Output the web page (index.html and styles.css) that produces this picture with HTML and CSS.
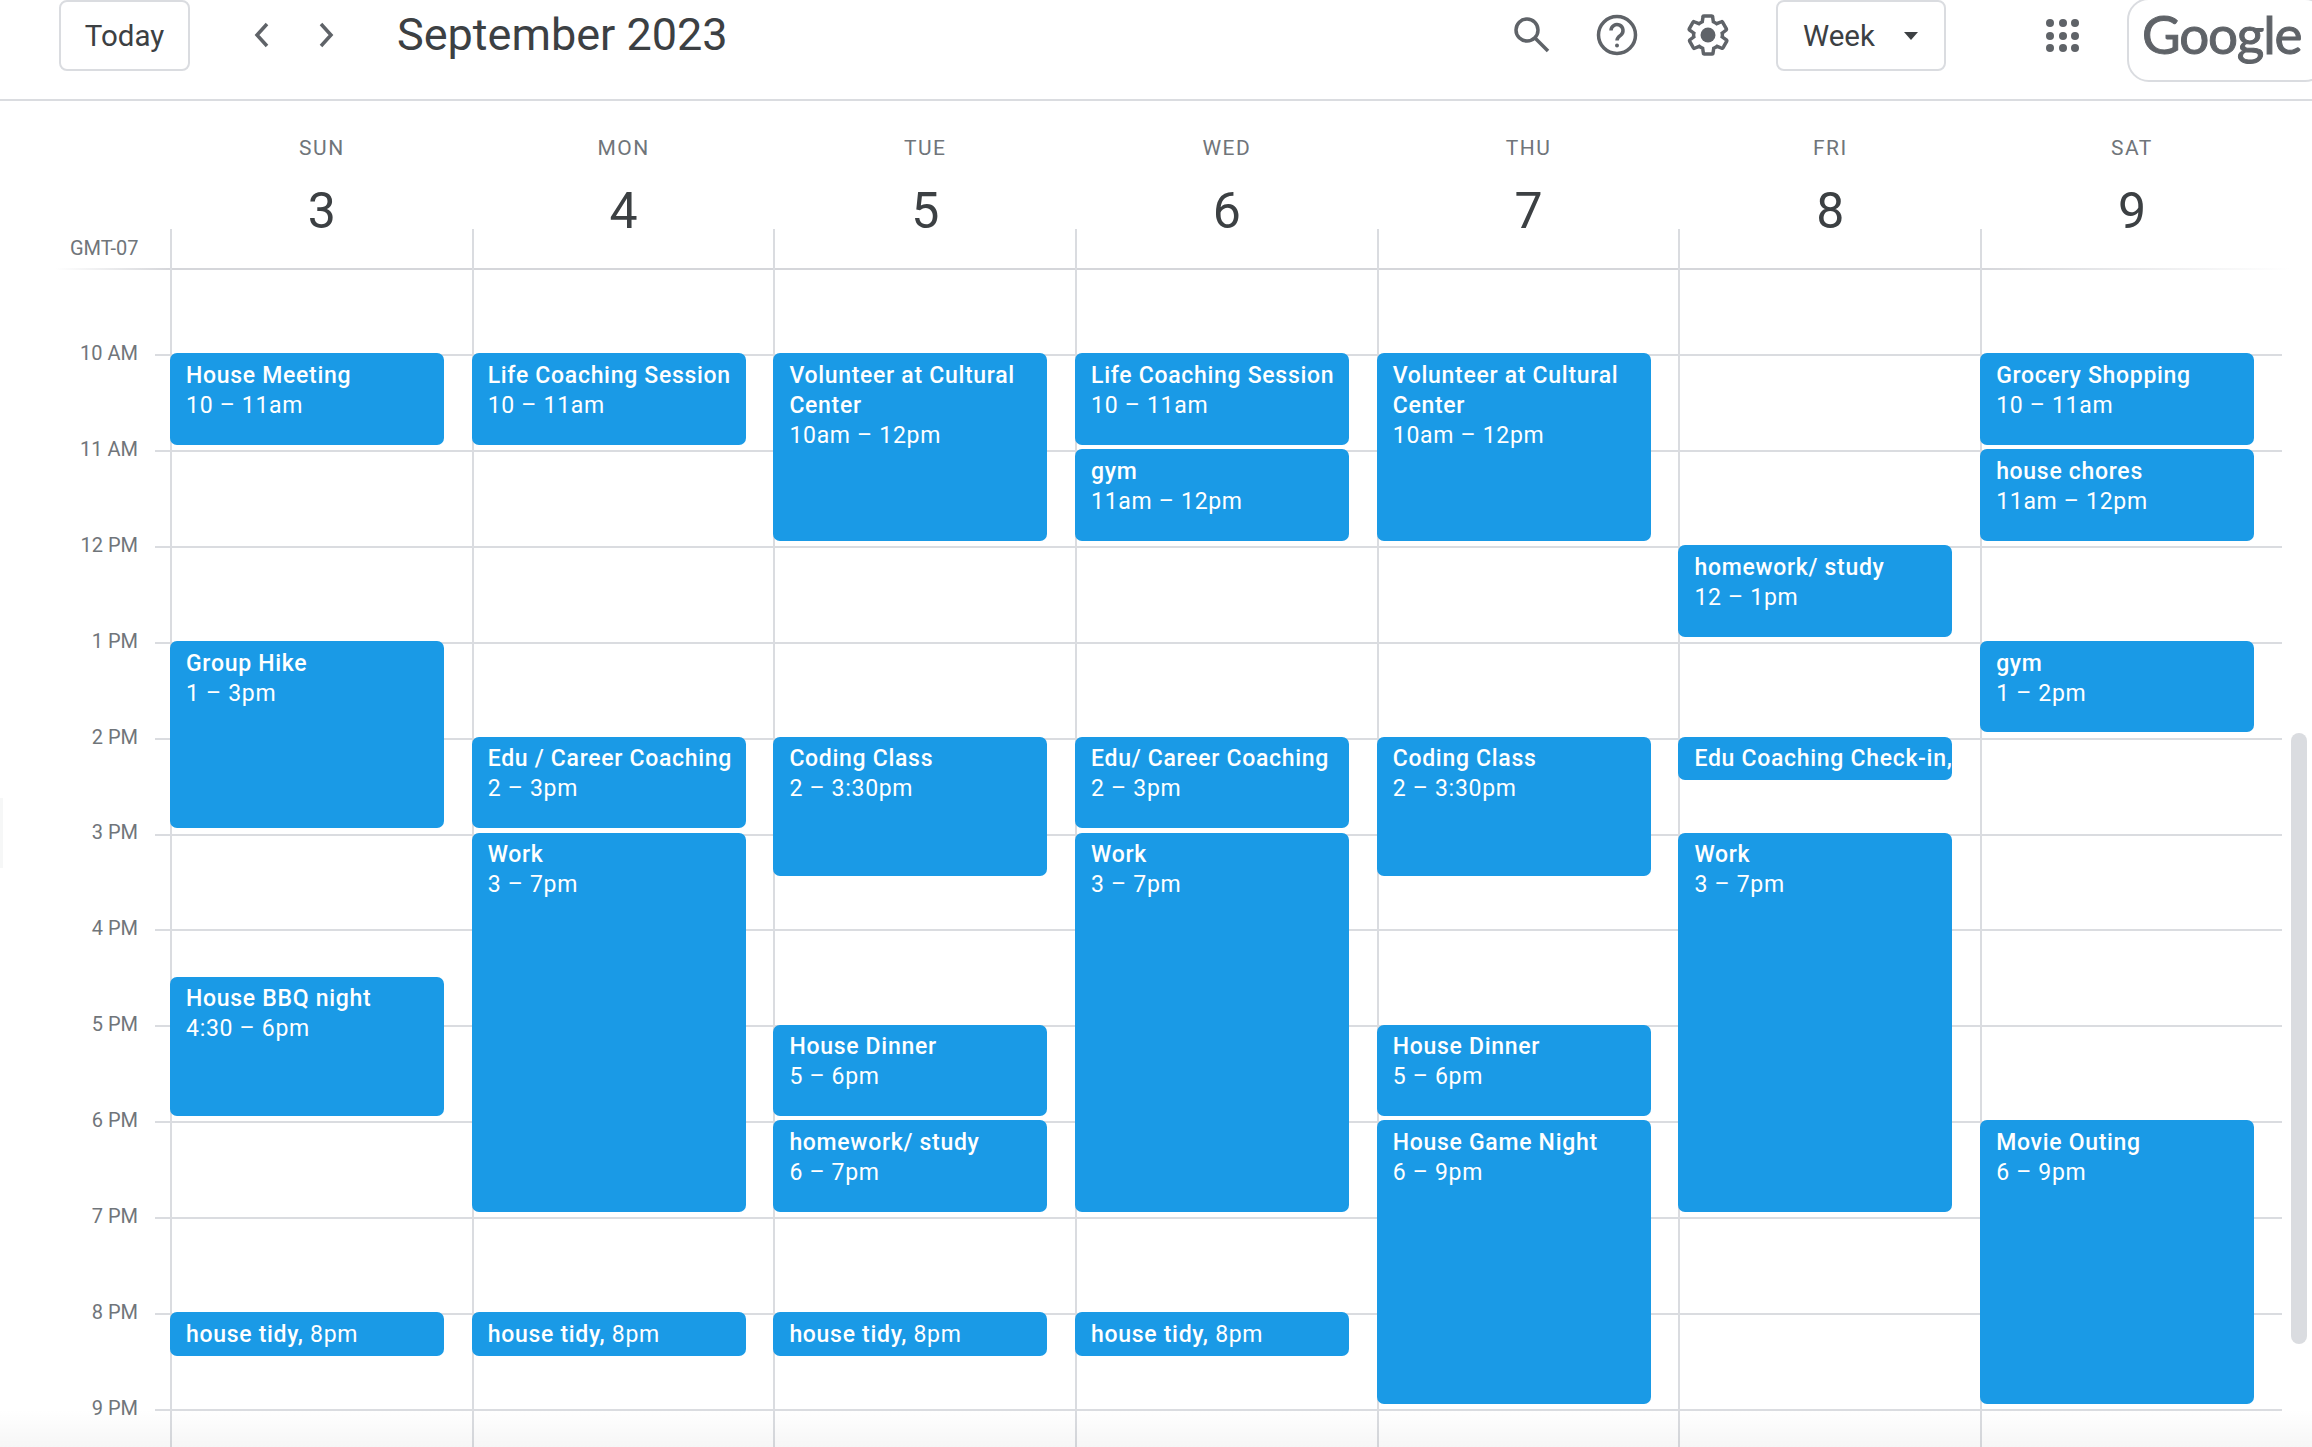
FILE: index.html
```html
<!DOCTYPE html>
<html lang="en">
<head>
  <meta charset="UTF-8" />
  <title>Calendar - September 2023</title>
  <link rel="stylesheet" href="styles.css">
</head>
<body>
<header class="topbar">
  <button class="btn today">Today</button>
  <div class="arrows">
    <svg width="16" height="26" viewBox="0 0 16 26"><path d="M13 2 3 13l10 11" /></svg>
    <svg width="16" height="26" viewBox="0 0 16 26"><path d="M3 2l10 11L3 24" /></svg>
  </div>
  <h1 class="month">September 2023</h1>
  <div class="tools">
    <svg class="search" width="36" height="36" viewBox="0 0 36 36"><circle cx="13" cy="13" r="11" /><path d="M21 21 34 34" /></svg>
    <svg class="help" width="42" height="42" viewBox="0 0 42 42"><circle cx="21" cy="21" r="18.5" /><path d="M15 16.5a6 6 0 1 1 9.600 4.800c-2.200 1.700-3.600 2.700-3.600 5.200" /><circle class="fill" cx="21" cy="31.500" r="2" /></svg>
    <svg class="gear" width="46" height="46" viewBox="0 0 24 24"><path d="M19.4 13c.1-.3.1-.6.1-1s0-.7-.1-1l2.100-1.600c.2-.2.2-.4.1-.6l-2-3.500c-.1-.2-.4-.3-.6-.2l-2.500 1c-.5-.4-1.100-.7-1.700-1l-.4-2.600c0-.3-.2-.4-.5-.4h-4c-.3 0-.5.100-.5.400l-.4 2.600c-.6.300-1.200.600-1.700 1l-2.500-1c-.2-.100-.5 0-.6.200l-2 3.500c-.1.200-.1.400.1.600L4.600 11c-.1.300-.1.600-.1 1s0 .7.100 1l-2.100 1.600c-.2.200-.2.400-.1.600l2 3.500c.1.200.4.300.6.200l2.500-1c.5.400 1.100.700 1.700 1l.4 2.600c0 .3.200.4.500.4h4c.3 0 .5-.100.500-.400l.4-2.600c.6-.300 1.200-.600 1.700-1l2.500 1c.2.100.5 0 .6-.200l2-3.500c.1-.2.1-.4-.1-.6z" /><circle class="fill" cx="12" cy="12" r="3.900" /></svg>
  </div>
  <button class="btn week">Week <span class="caret"></span></button>
  <div class="apps">
    <i></i><i></i><i></i><i></i><i></i><i></i><i></i><i></i><i></i>
  </div>
  <div class="logo">Google</div>
</header>

<div class="days">
  <div class="day"><span>SUN</span><b>3</b></div>
  <div class="day"><span>MON</span><b>4</b></div>
  <div class="day"><span>TUE</span><b>5</b></div>
  <div class="day"><span>WED</span><b>6</b></div>
  <div class="day"><span>THU</span><b>7</b></div>
  <div class="day"><span>FRI</span><b>8</b></div>
  <div class="day"><span>SAT</span><b>9</b></div>
</div>

<div class="allday">
  <div class="gmt">GMT-07</div>
  <div class="allday-cols">
    <div></div><div></div><div></div><div></div><div></div><div></div><div></div>
  </div>
</div>

<main class="schedule">
  <div class="hours">
    <span>10 AM</span><span>11 AM</span><span>12 PM</span><span>1 PM</span><span>2 PM</span><span>3 PM</span>
    <span>4 PM</span><span>5 PM</span><span>6 PM</span><span>7 PM</span><span>8 PM</span><span>9 PM</span>
  </div>
  <div class="grid" id="grid"></div>
</main>

<div class="scrollbar"></div>
<div class="edge"></div>
<div class="fade"></div>

<script src="app.js"></script>
</body>
</html>
```

FILE: styles.css
```css
* {
  box-sizing: border-box;
  margin: 0;
  padding: 0;
}

html, body {
  height: 100%;
  overflow: hidden;
}

body {
  background: #fff;
  color: #3c4043;
  font-family: Roboto, sans-serif;
}

svg {
  fill: none;
  stroke: #5f6368;
  stroke-width: 3.5;
  display: block;
}

svg .fill {
  fill: #5f6368;
  stroke: none;
}

svg.gear {
  stroke-width: 1.800;
}

/* top bar */
.topbar {
  height: 101px;
  border-bottom: 2px solid #dadce0;
  display: flex;
  align-items: flex-start;
  padding-left: 59px;
  overflow: hidden;
}

.btn {
  height: 71px;
  flex: none;
  background: #fff;
  border: 2px solid #dadce0;
  border-radius: 8px;
  color: #3c4043;
  font-family: Roboto, sans-serif;
  font-size: 29.500px;
}

.today {
  width: 131px;
}

.arrows {
  display: flex;
  gap: 48px;
  margin: 22px 0 0 64px;
}

.month {
  flex: none;
  font-size: 45px;
  font-weight: 400;
  line-height: 70px;
  margin-left: 63px;
  width: 1125px;
}

.tools {
  flex: none;
  display: flex;
  align-items: center;
  height: 70px;
  margin-left: -8px;
}

.help {
  margin-left: 46px;
}

.gear {
  margin-left: 47px;
}

.week {
  width: 170px;
  margin-left: 45px;
  display: flex;
  align-items: center;
  padding-left: 25px;
}

.caret {
  border-left: 7px solid transparent;
  border-right: 7px solid transparent;
  border-top: 8px solid #3c4043;
  margin-left: 29px;
}

.apps {
  flex: none;
  display: grid;
  grid-template-columns: repeat(3, 8px);
  gap: 4.500px;
  margin: 19px 0 0 100px;
}

.apps i {
  width: 8px;
  height: 8px;
  border-radius: 50%;
  background: #5f6368;
}

.logo {
  width: 200px;
  height: 84px;
  flex: none;
  margin: -2px 0 0 48px;
  border: 2px solid #dadce0;
  border-radius: 22px;
  padding-left: 13px;
  color: #5f6368;
  font-family: Lato, sans-serif;
  font-size: 53px;
  font-weight: 400;
  -webkit-text-stroke: 1px #5f6368;
  letter-spacing: -1.200px;
  line-height: 68px;
}

/* day heads */
.days {
  display: grid;
  grid-template-columns: repeat(7, 301.7px);
  padding-left: 171px;
  height: 128px;
  text-align: center;
}

.day span {
  display: block;
  margin-top: 33px;
  font-size: 21px;
  letter-spacing: 1.500px;
  line-height: 28px;
  color: #70757a;
}

.day b {
  display: block;
  font-size: 50px;
  font-weight: 400;
  line-height: 60px;
  margin-top: 19px;
}

.allday {
  display: flex;
  height: 41px;
  background: linear-gradient(90deg, transparent 55px, #d5d6da 170px, #d5d6da 1980px, transparent 2290px) 0 100% / 100% 2px no-repeat;
}

.gmt {
  width: 170px;
  padding: 5px 0 0 70px;
  font-size: 20px;
  line-height: 28px;
  color: #70757a;
}

.allday-cols {
  display: grid;
  grid-template-columns: repeat(7, 301.7px);
}

.allday-cols div {
  border-left: 2px solid #dadce0;
}

/* schedule */
.schedule {
  display: flex;
  height: 1177px;
}

.hours {
  width: 155px;
  padding: 69px 17px 0 0;
  display: grid;
  grid-auto-rows: 95.900px;
  text-align: right;
  font-size: 20px;
  line-height: 28px;
  color: #70757a;
}

.grid {
  width: 2127px;
  padding: 83.400px 0 0 15px;
  display: grid;
  grid-template-columns: repeat(7, 301.7px);
  background: repeating-linear-gradient(180deg, #dadce0 0, #dadce0 2px, transparent 2px, transparent 95.900px) 0 83.500px no-repeat;
}

.col {
  display: grid;
  grid-template-rows: repeat(48, 23.975px);
  margin-top: -83.400px;
  padding-top: 83.400px;
  border-left: 2px solid #dadce0;
}

.event {
  width: 274px;
  margin: 0 0 4.500px -2px;
  padding: 7.500px 8px 0 16px;
  background: #1a9ae6;
  border-radius: 7px;
  color: #fff;
  font-size: 23px;
  letter-spacing: 0.700px;
  line-height: 30px;
  overflow: hidden;
}

.event b {
  display: block;
  font-weight: 500;
}

.event.short {
  padding-right: 0;
  white-space: nowrap;
}

.event .when {
  font-weight: 400;
}

.scrollbar {
  position: absolute;
  left: 2291px;
  top: 733px;
  width: 16px;
  height: 611px;
  border-radius: 8px;
  background: #dadce0;
}

.edge {
  position: absolute;
  left: 0;
  top: 798px;
  width: 3px;
  height: 70px;
  background: #f6f7f7;
}

.fade {
  position: absolute;
  left: 0;
  right: 0;
  bottom: 0;
  height: 38px;
  background: linear-gradient(180deg, rgba(0, 0, 0, 0), rgba(0, 0, 0, 0.035));
}
```

FILE: app.js
```js
// day, start hour, end hour, title, time (24h, 10 = 10am)
const events = [
  [0, 10, 11, "House Meeting", "10 – 11am"],
  [0, 13, 15, "Group Hike", "1 – 3pm"],
  [0, 16.5, 18, "House BBQ night", "4:30 – 6pm"],
  [0, 20, 20.5, "house tidy", "8pm"],
  [1, 10, 11, "Life Coaching Session", "10 – 11am"],
  [1, 14, 15, "Edu / Career Coaching", "2 – 3pm"],
  [1, 15, 19, "Work", "3 – 7pm"],
  [1, 20, 20.5, "house tidy", "8pm"],
  [2, 10, 12, "Volunteer at Cultural Center", "10am – 12pm"],
  [2, 14, 15.5, "Coding Class", "2 – 3:30pm"],
  [2, 17, 18, "House Dinner", "5 – 6pm"],
  [2, 18, 19, "homework/ study", "6 – 7pm"],
  [2, 20, 20.5, "house tidy", "8pm"],
  [3, 10, 11, "Life Coaching Session", "10 – 11am"],
  [3, 11, 12, "gym", "11am – 12pm"],
  [3, 14, 15, "Edu/ Career Coaching", "2 – 3pm"],
  [3, 15, 19, "Work", "3 – 7pm"],
  [3, 20, 20.5, "house tidy", "8pm"],
  [4, 10, 12, "Volunteer at Cultural Center", "10am – 12pm"],
  [4, 14, 15.5, "Coding Class", "2 – 3:30pm"],
  [4, 17, 18, "House Dinner", "5 – 6pm"],
  [4, 18, 21, "House Game Night", "6 – 9pm"],
  [5, 12, 13, "homework/ study", "12 – 1pm"],
  [5, 14, 14.5, "Edu Coaching Check-in", ""],
  [5, 15, 19, "Work", "3 – 7pm"],
  [6, 10, 11, "Grocery Shopping", "10 – 11am"],
  [6, 11, 12, "house chores", "11am – 12pm"],
  [6, 13, 14, "gym", "1 – 2pm"],
  [6, 18, 21, "Movie Outing", "6 – 9pm"]
];

const grid = document.getElementById("grid");

for (let d = 0; d < 7; d++) {
  const col = document.createElement("div");
  col.className = "col";
  events.filter(e => e[0] === d).forEach(e => {
    const div = document.createElement("div");
    const short = e[2] - e[1] < 1;
    div.className = short ? "event short" : "event";
    div.style.gridRow = `${(e[1] - 10) * 4 + 1} / ${(e[2] - 10) * 4 + 1}`;
    div.innerHTML = short
      ? `<b>${e[3]}, <span class="when">${e[4]}</span></b>`
      : `<b>${e[3]}</b>${e[4]}`;
    col.appendChild(div);
  });
  grid.appendChild(col);
}
```
